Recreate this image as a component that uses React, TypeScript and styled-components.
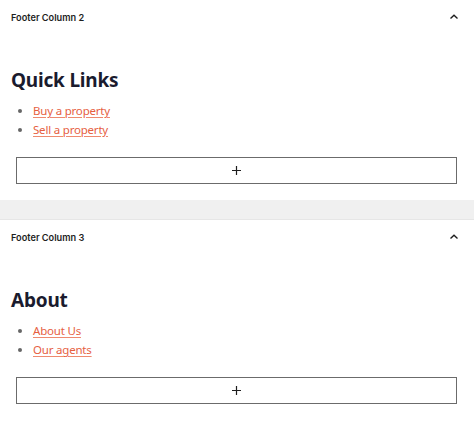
import React from "react";
import styled, { createGlobalStyle } from "styled-components";

const Global = createGlobalStyle`
  html, body { margin: 0; padding: 0; background: #ffffff; }
  body { font-family: "Noto Sans", sans-serif; }
`;

const Page = styled.div`
  width: 474px;
  display: flex;
  flex-direction: column;
`;

const Panel = styled.section`
  background: #ffffff;
  padding-bottom: 16px;
`;

const PanelHeader = styled.div`
  height: 34px;
  padding: 0 11px;
  display: flex;
  align-items: center;
  justify-content: space-between;
  font-family: Inter, "Liberation Sans", sans-serif;
  font-size: 9.2px;
  font-weight: 600;
  color: #1e1e1e;
`;

const Chevron = styled.svg`
  width: 10px;
  height: 10px;
  margin-right: 4px;
`;

const Body = styled.div`
  padding: 0 11px;
  display: flex;
  flex-direction: column;
`;

const Heading = styled.h2`
  margin: 34px 0 0;
  font-family: "Noto Sans", sans-serif;
  font-size: 19px;
  letter-spacing: -0.2px;
  line-height: 24px;
  font-weight: 700;
  color: #1a1b2e;
`;

const List = styled.ul`
  margin: 9px 0 0;
  padding-left: 22px;
  font-family: "Noto Sans", sans-serif;
  font-size: 11.5px;
  letter-spacing: -0.2px;
  line-height: 19px;
  color: #555;
`;

const Item = styled.li`
  &::marker { color: #666; font-size: 12px; }
`;

const Link = styled.a`
  color: #e6603f;
  text-decoration: underline;
  text-decoration-color: #ee8a6f;
  text-underline-offset: 2px;
`;

const AddButton = styled.button`
  margin: 18px 6px 0 5px;
  height: 27px;
  border: 1px solid #6b6b6b;
  background: #fff;
  display: flex;
  align-items: center;
  justify-content: center;
  padding: 0;
  cursor: pointer;
`;

const Divider = styled.div`
  height: 20px;
  background: #f0f0f0;
  border-bottom: 1px solid #e6e6e6;
  box-sizing: border-box;
`;

const ChevronUp = () => (
  <Chevron viewBox="0 0 10 10">
    <path d="M1.5 6.5 L5 3.2 L8.5 6.5" fill="none" stroke="#1e1e1e" strokeWidth="1.4" />
  </Chevron>
);

const Plus = () => (
  <svg width="11" height="11" viewBox="0 0 11 11">
    <path d="M5.5 1 V10 M1 5.5 H10" stroke="#1e1e1e" strokeWidth="1.2" />
  </svg>
);

type Col = { title: string; heading: string; links: string[] };

const cols: Col[] = [
  { title: "Footer Column 2", heading: "Quick Links", links: ["Buy a property", "Sell a property"] },
  { title: "Footer Column 3", heading: "About", links: ["About Us", "Our agents"] },
];

const ColumnPanel = ({ c }: { c: Col }) => (
  <Panel>
    <PanelHeader>
      <span>{c.title}</span>
      <ChevronUp />
    </PanelHeader>
    <Body>
      <Heading>{c.heading}</Heading>
      <List>
        {c.links.map((l) => (
          <Item key={l}>
            <Link href="#">{l}</Link>
          </Item>
        ))}
      </List>
      <AddButton aria-label="Add block">
        <Plus />
      </AddButton>
    </Body>
  </Panel>
);

export default function App() {
  return (
    <Page>
      <Global />
      <ColumnPanel c={cols[0]} />
      <Divider />
      <ColumnPanel c={cols[1]} />
    </Page>
  );
}
